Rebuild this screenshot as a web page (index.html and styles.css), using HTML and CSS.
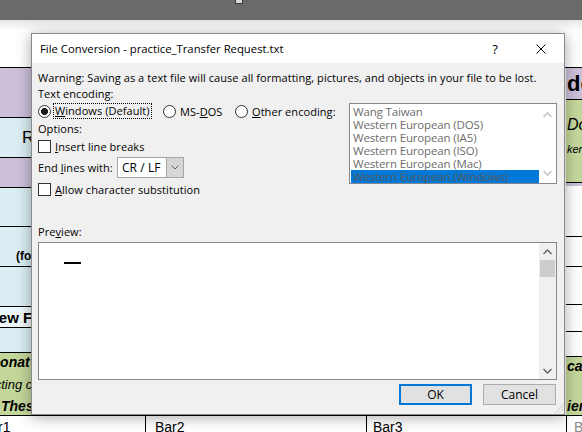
FILE: index.html
```html
<!DOCTYPE html>
<html lang="en">
<head>
  <meta charset="UTF-8" />
  <title>File Conversion</title>
  <link rel="stylesheet" href="styles.css">
</head>
<body>
  <div class="topbar"><span class="topbar-mark"></span></div>

  <div class="page">
    <div class="doc-table">
      <div class="doc-upper">
        <div class="doc-col doc-col-left">
          <div class="cell purple"></div>
          <div class="cell blue txt-r">Re</div>
          <div class="cell purple"></div>
          <div class="cell blue"></div>
          <div class="cell blue txt-fo">(for</div>
          <div class="cell blue"></div>
          <div class="cell pale txt-new">New F</div>
          <div class="cell blue"></div>
          <div class="cell green stack">
            <span class="g-bold txt-donat">Donat</span>
            <span class="g-ital">Acting c</span>
            <span class="g-bold txt-these">These</span>
          </div>
        </div>
        <div class="doc-col doc-col-mid"></div>
        <div class="doc-col doc-col-right">
          <div class="cell purple txt-de">de</div>
          <div class="cell green stack-top">
            <span class="r-ital">Dor</span>
            <span class="r-small">ken</span>
          </div>
          <div class="cell rule"></div>
          <div class="cell"></div>
          <div class="cell"></div>
          <div class="cell"></div>
          <div class="cell"></div>
          <div class="cell"></div>
          <div class="cell green stack">
            <span class="g-bold">car</span>
            <span class="g-bold">ier</span>
          </div>
        </div>
      </div>
      <div class="doc-bars">
        <div class="bar-cell">Bar1</div>
        <div class="bar-cell">Bar2</div>
        <div class="bar-cell">Bar3</div>
        <div class="bar-cell bar-dim">Bar4</div>
      </div>
    </div>
  </div>

  <div class="dialog">
    <div class="titlebar">
      <span class="dlg-title">File Conversion - practice_Transfer Request.txt</span>
      <span class="tb-btn">?</span>
      <span class="tb-btn">
        <svg width="10" height="10" viewBox="0 0 10 10"><path d="M0.5 0.5 L9.5 9.5 M9.5 0.5 L0.5 9.5" stroke="#000" stroke-width="1" fill="none"/></svg>
      </span>
    </div>

    <div class="dlg-body">
      <div class="line">Warning: Saving as a text file will cause all formatting, pictures, and objects in your file to be lost.</div>
      <div class="line">Text encoding:</div>

      <div class="enc-area">
        <div class="enc-left">
          <div class="radios">
            <label class="radio radio-win"><span class="radio-dot checked"></span><span class="focus"><u>W</u>indows (Default)</span></label>
            <label class="radio radio-dos"><span class="radio-dot"></span><span>MS-<u>D</u>OS</span></label>
            <label class="radio"><span class="radio-dot"></span><span><u>O</u>ther encoding:</span></label>
          </div>
          <div class="line options">Options:</div>
          <label class="check"><span class="check-box"></span><span><u>I</u>nsert line breaks</span></label>
          <div class="endlines">
            <span class="endlines-label">End <u>l</u>ines with:</span>
            <div class="combo">
              <span class="combo-text">CR / LF</span>
              <span class="combo-btn">
                <svg width="8" height="5" viewBox="0 0 8 5"><path d="M0.5 0.5 L4 4 L7.5 0.5" stroke="#606060" fill="none"/></svg>
              </span>
            </div>
          </div>
          <label class="check check-allow"><span class="check-box"></span><span><u>A</u>llow character substitution</span></label>
        </div>

        <div class="listbox">
          <div class="list-items">
            <div class="list-item">Wang Taiwan</div>
            <div class="list-item">Western European (DOS)</div>
            <div class="list-item">Western European (IA5)</div>
            <div class="list-item">Western European (ISO)</div>
            <div class="list-item">Western European (Mac)</div>
            <div class="list-item selected">Western European (Windows)</div>
          </div>
          <div class="list-scroll">
            <svg width="9" height="6" viewBox="0 0 9 6"><path d="M0.5 5 L4.5 1 L8.5 5" stroke="#c2c2c2" stroke-width="1.3" fill="none"/></svg>
            <svg width="9" height="6" viewBox="0 0 9 6"><path d="M0.5 1 L4.5 5 L8.5 1" stroke="#c2c2c2" stroke-width="1.3" fill="none"/></svg>
          </div>
        </div>
      </div>

      <div class="line preview-label">Pre<u>v</u>iew:</div>
      <div class="preview">
        <div class="preview-text"><span class="dash"></span></div>
        <div class="pv-scroll">
          <span class="pv-arrow">
            <svg width="9" height="6" viewBox="0 0 9 6"><path d="M0.5 5 L4.5 1 L8.5 5" stroke="#606060" stroke-width="1.4" fill="none"/></svg>
          </span>
          <span class="pv-thumb"></span>
          <span class="pv-arrow pv-down">
            <svg width="9" height="6" viewBox="0 0 9 6"><path d="M0.5 1 L4.5 5 L8.5 1" stroke="#606060" stroke-width="1.4" fill="none"/></svg>
          </span>
        </div>
      </div>

      <div class="dlg-buttons">
        <button class="btn btn-default">OK</button>
        <button class="btn">Cancel</button>
      </div>
    </div>

    <svg class="grip" width="11" height="11" viewBox="0 0 11 11">
      <path d="M10 2 L2 10 M10 6 L6 10" stroke="#a8a8a8" stroke-width="1" stroke-dasharray="1 1" fill="none"/>
    </svg>
  </div>
</body>
</html>
```

FILE: styles.css
```css
* {
  box-sizing: border-box;
}
html, body {
  margin: 0;
}
body {
  width: 582px;
  height: 432px;
  overflow: hidden;
  position: relative;
  background: #fff;
  font-family: "Liberation Sans", Arial, sans-serif;
}

/* word window behind the dialog */
.topbar {
  height: 20px;
  background: #6a6a6a;
}
.topbar-mark {
  display: block;
  margin-left: 235px;
  width: 8px;
  height: 4px;
  background: #d9d9d9;
  border: 1px solid #3a3a3a;
  border-top: 0;
}
.page {
  padding-top: 47px;
  background: linear-gradient(#e4e4e4, #fff 10px);
}
.doc-table {
  margin-left: -20px;
  width: 640px;
  border-top: 1px solid #000;
}
.doc-upper {
  display: flex;
}
.doc-col-left {
  width: 165px;
}
.doc-col-mid {
  flex: 1;
}
.doc-col-right {
  width: 54px;
}
.cell {
  border-bottom: 1px solid #000;
  overflow: hidden;
  white-space: nowrap;
  display: flex;
  align-items: center;
  padding-left: 20px;
}
.cell:last-child {
  border-bottom: 0;
}
.purple { background: #ccc0da; }
.blue { background: #daeef3; }
.pale { background: #eef7f9; }
.green { background: #c4d79b; }

.doc-col-left .cell:nth-child(1) { height: 50px; }
.doc-col-left .cell:nth-child(2) { height: 40px; }
.doc-col-left .cell:nth-child(3) { height: 30px; }
.doc-col-left .cell:nth-child(4) { height: 39px; }
.doc-col-left .cell:nth-child(5) { height: 40px; }
.doc-col-left .cell:nth-child(6) { height: 40px; }
.doc-col-left .cell:nth-child(7) { height: 21px; }
.doc-col-left .cell:nth-child(8) { height: 25px; }
.doc-col-left .cell:nth-child(9) { height: 62px; }

.doc-col-right .cell { padding-left: 1px; }
.doc-col-right .cell:nth-child(1) { height: 32px; }
.doc-col-right .cell:nth-child(2) { height: 83px; }
.doc-col-right .cell:nth-child(3) { height: 3px; }
.doc-col-right .cell:nth-child(4) { height: 51px; }
.doc-col-right .cell:nth-child(5) { height: 30px; }
.doc-col-right .cell:nth-child(6) { height: 38px; }
.doc-col-right .cell:nth-child(7) { height: 27px; }
.doc-col-right .cell:nth-child(8) { height: 25px; }
.doc-col-right .cell:nth-child(9) { height: 58px; }
.rule {
  background: #ccc0da;
  border-bottom: 0;
}

.txt-r {
  padding-left: 42px;
  font-size: 17px;
}
.txt-fo {
  padding-left: 36px;
  align-items: flex-end;
  padding-bottom: 3px;
  font-size: 12px;
  font-weight: bold;
}
.txt-new {
  padding-left: 8px;
  font-size: 15px;
  font-weight: bold;
}
.stack {
  flex-direction: column;
  align-items: flex-start;
  justify-content: space-between;
  padding-top: 1px;
  padding-bottom: 1px;
}
.stack-top {
  flex-direction: column;
  align-items: flex-start;
  justify-content: flex-start;
  padding-top: 16px;
  gap: 9px;
}
.g-bold {
  font-size: 14px;
  font-weight: bold;
  font-style: italic;
}
.g-ital {
  font-size: 13px;
  font-style: italic;
}
.txt-donat { margin-left: -10px; }
.doc-col-left .g-ital { margin-left: -14px; }
.txt-these { margin-left: 1px; }
.txt-de {
  font-size: 22px;
  font-weight: bold;
}
.r-ital {
  font-size: 16px;
  font-style: italic;
}
.r-small {
  font-size: 11px;
  font-style: italic;
}

.doc-bars {
  display: flex;
  border-top: 1px solid #000;
  height: 20px;
}
.bar-cell {
  border-right: 1px solid #000;
  padding: 3px 0 0 7px;
  font-size: 14px;
}
.bar-cell:nth-child(1) { width: 166px; padding-left: 1px; }
.bar-cell:nth-child(2) { width: 221px; padding-left: 9px; }
.bar-cell:nth-child(3) { width: 200px; padding-left: 6px; }
.bar-cell:nth-child(4) { flex: 1; border-right: 0; }
.bar-dim { color: #8a8a8a; }

/* the dialog */
.dialog {
  position: absolute;
  left: 31px;
  top: 33px;
  width: 534px;
  height: 382px;
  border: 1px solid #8a8a8a;
  background: #f0f0f0;
  box-shadow: 0 2px 14px rgba(0, 0, 0, 0.35);
  display: flex;
  flex-direction: column;
  font-family: "Open Sans", "Noto Sans", sans-serif;
  font-size: 11px;
  color: #000;
}
.titlebar {
  height: 29px;
  background: #fff;
  display: flex;
  align-items: center;
}
.dlg-title {
  flex: 1;
  padding-left: 8px;
  font-size: 11.3px;
}
.tb-btn {
  width: 46px;
  height: 29px;
  display: flex;
  align-items: center;
  justify-content: center;
  font-size: 13px;
}
.dlg-body {
  flex: 1;
  padding: 7px 7px 0 6px;
  letter-spacing: 0.06px;
}
.line {
  height: 16px;
  line-height: 16px;
  white-space: nowrap;
}
u {
  text-underline-offset: 1px;
}

.enc-area {
  display: flex;
}
.enc-left {
  width: 311px;
}
.radios {
  display: flex;
  height: 18px;
  align-items: center;
}
.radio {
  display: flex;
  align-items: center;
  gap: 4px;
}
.radio-win {
  width: 125px;
  gap: 2px;
}
.radio-dos {
  width: 72px;
}
.radio-dot {
  width: 13px;
  height: 13px;
  border: 1px solid #333;
  border-radius: 50%;
  background: #fff;
}
.radio-dot.checked {
  background: radial-gradient(circle, #1a1a1a 0 3.2px, #fff 3.8px);
}
.focus {
  border: 1px dotted #000;
  height: 16px;
  line-height: 14px;
  padding: 0 1px;
}
.options {
  height: 17px;
  line-height: 17px;
}
.check {
  display: flex;
  align-items: center;
  gap: 4px;
  height: 18px;
}
.check-allow {
  height: 19px;
}
.check-box {
  width: 13px;
  height: 13px;
  border: 1px solid #333;
  background: #fff;
}
.endlines {
  display: flex;
  align-items: center;
  height: 25px;
}
.endlines-label {
  width: 79px;
}
.combo {
  width: 67px;
  height: 21px;
  border: 1px solid #a6a6a6;
  background: #fff;
  display: flex;
}
.combo-text {
  flex: 1;
  padding-left: 4px;
  line-height: 19px;
  font-size: 12px;
}
.combo-btn {
  width: 17px;
  background: #d6d6d6;
  border-left: 1px solid #a6a6a6;
  display: flex;
  align-items: center;
  justify-content: center;
}

.listbox {
  margin-left: auto;
  margin-top: 1px;
  width: 208px;
  height: 81px;
  border: 1px solid #828790;
  background: #fff;
  display: flex;
}
.list-items {
  flex: 1;
  padding-top: 1px;
}
.list-item {
  height: 13px;
  line-height: 13px;
  margin-left: 1px;
  padding-left: 2px;
  color: #6d6d6d;
  font-size: 11.5px;
  letter-spacing: -0.15px;
  white-space: nowrap;
}
.list-item.selected {
  background: #0078d7;
  color: #5a5a5a;
}
.list-scroll {
  width: 17px;
  display: flex;
  flex-direction: column;
  align-items: center;
  justify-content: space-between;
  padding: 8px 0 7px;
}

.preview-label {
  margin-top: 25px;
}
.preview {
  margin-top: 2px;
  height: 138px;
  border: 1px solid #828790;
  background: #fff;
  display: flex;
}
.preview-text {
  flex: 1;
}
.dash {
  display: block;
  margin: 19px 0 0 25px;
  width: 17px;
  height: 2px;
  background: #000;
}
.pv-scroll {
  width: 17px;
  background: #f0f0f0;
  display: flex;
  flex-direction: column;
  align-items: center;
}
.pv-arrow {
  height: 17px;
  display: flex;
  align-items: center;
  justify-content: center;
}
.pv-down {
  margin-top: auto;
}
.pv-thumb {
  width: 15px;
  height: 17px;
  background: #cdcdcd;
}

.dlg-buttons {
  display: flex;
  justify-content: flex-end;
  gap: 11px;
  margin-top: 4px;
  padding-right: 1px;
}
.btn {
  width: 73px;
  height: 21px;
  padding: 0;
  background: #e1e1e1;
  border: 1px solid #adadad;
  font-family: "Open Sans", "Noto Sans", sans-serif;
  font-size: 12px;
  color: #000;
}
.btn-default {
  border: 2px solid #0078d7;
}
.grip {
  position: absolute;
  right: 0;
  bottom: 0;
}
```
